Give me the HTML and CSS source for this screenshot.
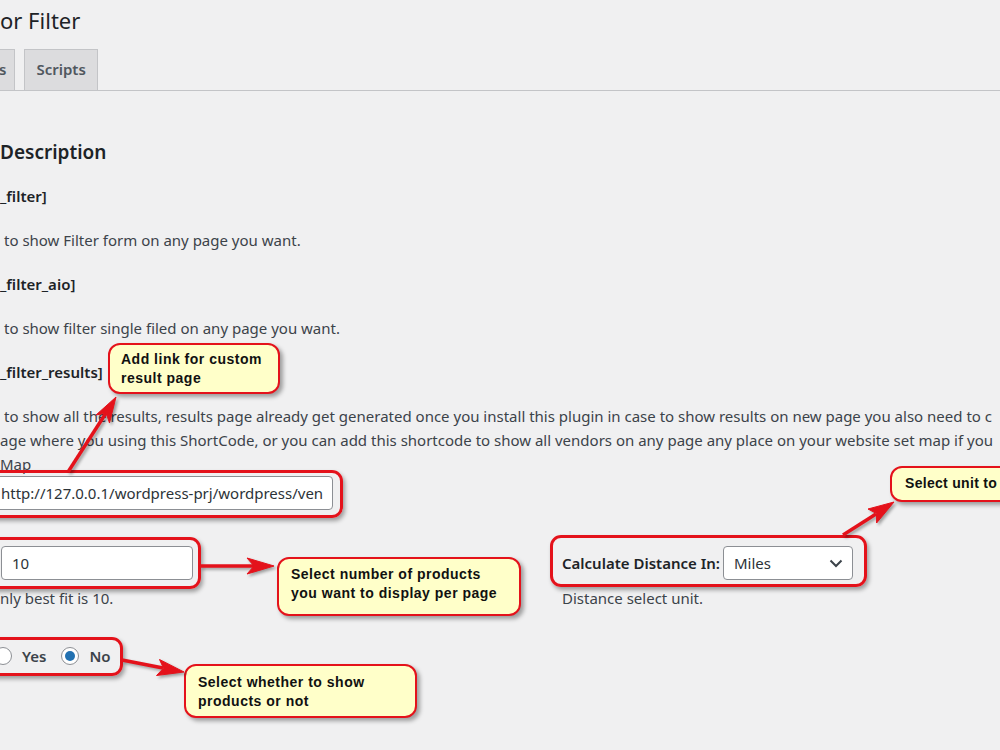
FILE: index.html
```html
<!DOCTYPE html>
<html lang="en">
<head>
<meta charset="utf-8">
<title>Vendor Filter</title>
<link rel="stylesheet" href="styles.css">
</head>
<body>
<div class="page">
  <h1 class="title">or Filter</h1>
  <nav class="tabs">
    <span class="tab tab-cut">s</span>
    <span class="tab">Scripts</span>
  </nav>

  <section class="desc">
    <h2 class="desc-title">Description</h2>
    <div class="items">
      <p class="code">_filter]</p>
      <p class="text">to show Filter form on any page you want.</p>
      <p class="code">_filter_aio]</p>
      <p class="text">to show filter single filed on any page you want.</p>
      <p class="code">_filter_results]</p>
      <div class="long">
        <p class="text">to show all the results, results page already get generated once you install this plugin in case to show results on new page you also need to c</p>
        <p class="line">age where you using this ShortCode, or you can add this shortcode to show all vendors on any page any place on your website set map if you</p>
        <p class="line">Map</p>
      </div>
    </div>
  </section>

  <div class="input input-url">http://127.0.0.1/wordpress-prj/wordpress/ven</div>

  <div class="row">
    <div class="col col-left">
      <div class="input input-num">10</div>
      <p class="hint">nly best fit is 10.</p>
    </div>
    <div class="col col-right">
      <div class="inline">
        <span class="label">Calculate Distance In:</span>
        <div class="select">
          <span>Miles</span>
          <svg class="chev" width="14" height="9" viewBox="0 0 14 9"><path d="M1.5 1.5 L7 7 L12.5 1.5" fill="none" stroke="#3c434a" stroke-width="2"/></svg>
        </div>
      </div>
      <p class="hint">Distance select unit.</p>
    </div>
  </div>

  <div class="radios">
    <span class="radio"></span><span class="radio-label">Yes</span>
    <span class="radio checked"></span><span class="radio-label">No</span>
  </div>

  <!-- annotations -->
  <div class="hl hl-url"></div>
  <div class="hl hl-num"></div>
  <div class="hl hl-dist"></div>
  <div class="hl hl-radio"></div>

  <div class="callout c1">Add link for custom<br>result page</div>
  <div class="callout c2">Select number of products<br>you want to display per page</div>
  <div class="callout c3">Select unit to</div>
  <div class="callout c4">Select whether to show<br>products or not</div>

  <svg class="arrows" width="1000" height="750" viewBox="0 0 1000 750">
    <g fill="#e4121b" stroke="#e4121b" stroke-linejoin="round">
      <line x1="68" y1="472" x2="106" y2="413" stroke-width="3.5"/>
      <polygon points="116,397 109.5,423 106.2,413.1 96,415" stroke-width="1"/>
      <line x1="200" y1="566" x2="254" y2="566" stroke-width="3.5"/>
      <polygon points="274,566 247,574 254,566 247,558" stroke-width="1"/>
      <line x1="843" y1="535" x2="876" y2="514" stroke-width="3.5"/>
      <polygon points="894,502 876.6,523 876.5,513.5 868,509" stroke-width="1"/>
      <line x1="122" y1="660" x2="163" y2="668" stroke-width="3.5"/>
      <polygon points="184,672 156.5,675.5 163.5,668.2 159.5,659.5" stroke-width="1"/>
    </g>
  </svg>
</div>
</body>
</html>
```

FILE: styles.css
```css
* { box-sizing: border-box; }

html, body {
  margin: 0;
  padding: 0;
  background: #f0f0f1;
}

body {
  font-family: "Noto Sans", "Open Sans", sans-serif;
  font-size: 15px;
  color: #3c434a;
}

.page {
  position: relative;
  width: 1000px;
  height: 750px;
  overflow: hidden;
}

.title {
  margin: 0;
  padding-top: 5px;
  font-size: 22px;
  line-height: 30px;
  font-weight: 400;
  color: #1d2327;
}

.tabs {
  display: flex;
  align-items: flex-end;
  gap: 9px;
  margin-top: 15px;
  height: 41px;
  border-bottom: 1px solid #c3c4c7;
}

.tab {
  height: 41px;
  padding: 0 11px;
  border: 1px solid #c3c4c7;
  border-bottom: none;
  background: #dcdcde;
  font-size: 15px;
  font-weight: 600;
  line-height: 39px;
  color: #50575e;
}

.tab-cut {
  margin-left: -2px;
  padding: 0 8px 0 0;
}

.desc-title {
  margin: 48px 0 0;
  font-size: 19px;
  line-height: 26px;
  font-weight: 600;
  color: #1d2327;
}

.items {
  display: flex;
  flex-direction: column;
  gap: 20px;
  margin-top: 19px;
}

.items p,
.long p {
  margin: 0;
  line-height: 24px;
  white-space: nowrap;
}

.code {
  font-weight: 600;
  color: #1d2327;
}

.text {
  padding-left: 4px;
}

.long .line {
  padding-left: 0;
}

.input {
  height: 34px;
  border: 1px solid #8c8f94;
  border-radius: 4px;
  background: #fff;
  color: #2c3338;
  line-height: 32px;
  font-size: 15px;
  white-space: nowrap;
  overflow: hidden;
}

.input-url {
  width: 343px;
  margin-left: -10px;
  padding-left: 10px;
}

.row {
  display: flex;
  margin-top: 36px;
}

.col-left {
  width: 562px;
}

.input-num {
  width: 192px;
  margin-left: 1px;
  padding-left: 10px;
}

.hint {
  margin: 6px 0 0;
  line-height: 24px;
}

.inline {
  display: flex;
  align-items: center;
  gap: 3px;
}

.label {
  font-weight: 600;
  color: #1d2327;
}

.select {
  display: flex;
  align-items: center;
  justify-content: space-between;
  width: 130px;
  height: 34px;
  padding: 0 9px 0 10px;
  border: 1px solid #8c8f94;
  border-radius: 4px;
  background: #fff;
  color: #2c3338;
}

.radios {
  display: flex;
  align-items: center;
  height: 24px;
  margin-top: 34px;
  margin-left: -6px;
}

.radio {
  position: relative;
  width: 18px;
  height: 18px;
  border: 1px solid #8c8f94;
  border-radius: 50%;
  background: #fff;
}

.radio.checked::after {
  content: "";
  position: absolute;
  left: 3px;
  top: 3px;
  width: 10px;
  height: 10px;
  border-radius: 50%;
  background: #2271b1;
}

.radio-label {
  margin: 0 15px 0 10px;
  font-weight: 600;
  color: #3c434a;
}

/* annotations */
.hl {
  position: absolute;
  border: 3px solid #e4121b;
  border-radius: 11px;
  box-shadow: 2px 3px 4px rgba(0, 0, 0, 0.35);
}

.hl-url { left: -20px; top: 470px; width: 363px; height: 48px; }
.hl-num { left: -20px; top: 537px; width: 221px; height: 52px; }
.hl-dist { left: 550px; top: 535px; width: 317px; height: 52px; }
.hl-radio { left: -20px; top: 637px; width: 143px; height: 39px; }

.callout {
  position: absolute;
  border: 2px solid #e4121b;
  border-radius: 12px;
  background: #ffffc9;
  box-shadow: 3px 3px 4px rgba(0, 0, 0, 0.35);
  font-family: "Liberation Sans", Arial, sans-serif;
  font-weight: 700;
  font-size: 14px;
  letter-spacing: 0.5px;
  line-height: 19px;
  color: #111;
  white-space: nowrap;
}

.c1 { left: 108px; top: 343px; width: 172px; height: 51px; padding: 5px 0 0 11px; }
.c2 { left: 277px; top: 557px; width: 244px; height: 59px; padding: 6px 0 0 12px; }
.c3 { left: 890px; top: 466px; width: 140px; height: 36px; padding: 6px 0 0 13px; letter-spacing: 0.3px; }
.c4 { left: 184px; top: 664px; width: 233px; height: 54px; padding: 7px 0 0 12px; }

.arrows {
  position: absolute;
  left: 0;
  top: 0;
  pointer-events: none;
  filter: drop-shadow(2px 2px 1.5px rgba(0, 0, 0, 0.35));
}
```
